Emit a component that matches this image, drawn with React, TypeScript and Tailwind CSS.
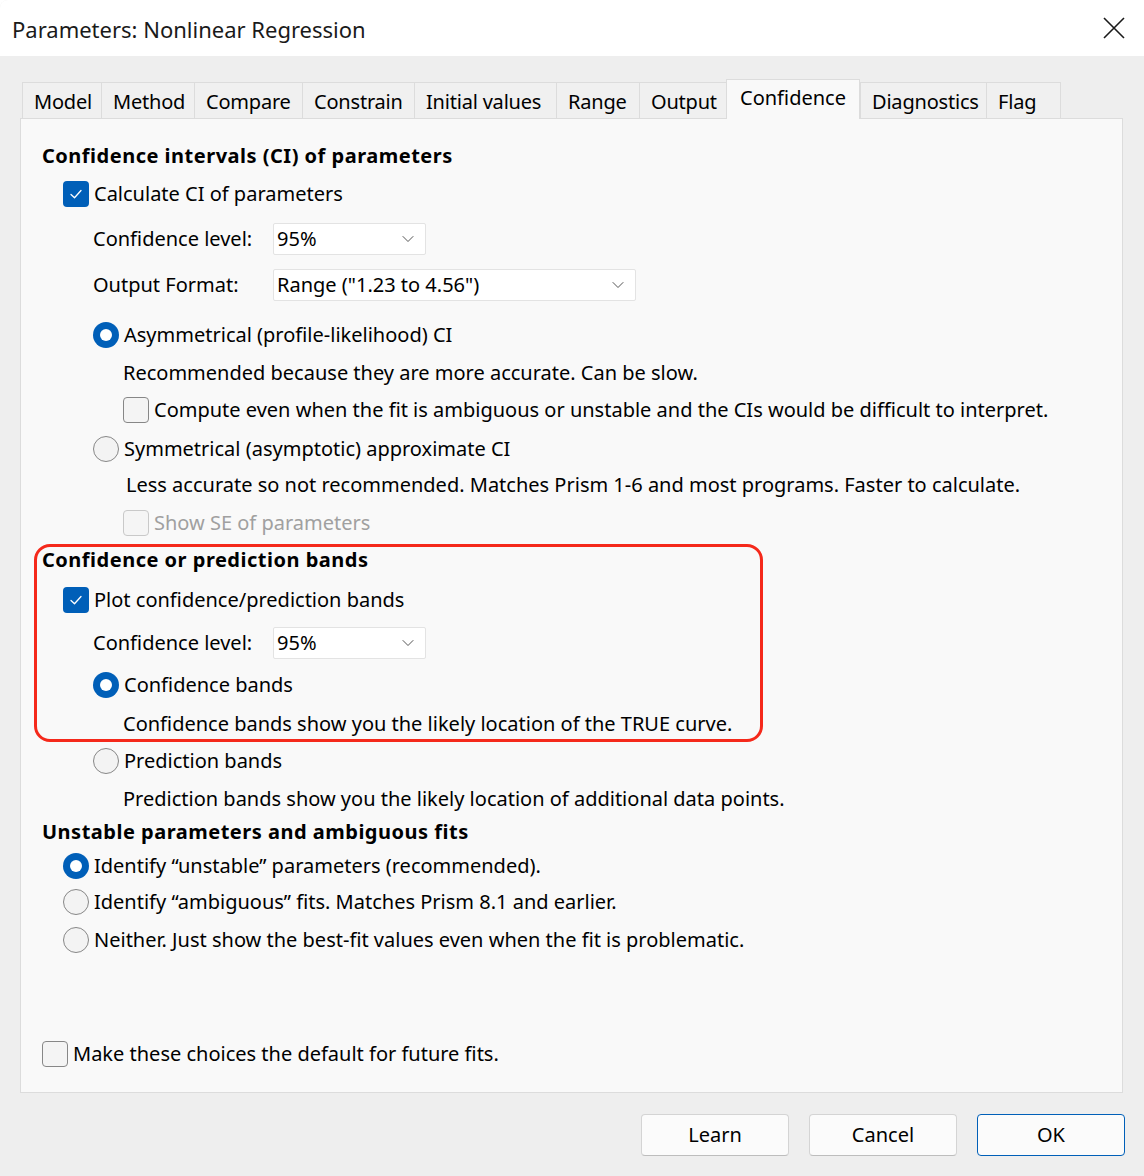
import React from 'react';
import { ChevronDown } from 'lucide-react';

const FONT = { fontFamily: '"Segoe UI", "Noto Sans", "Open Sans", sans-serif' };

const TABS = [
  { label: 'Model', w: 'w-[79px]' },
  { label: 'Method', w: 'w-[93px]' },
  { label: 'Compare', w: 'w-[108px]' },
  { label: 'Constrain', w: 'w-[112px]' },
  { label: 'Initial values', w: 'w-[142px]' },
  { label: 'Range', w: 'w-[83px]' },
  { label: 'Output', w: 'w-[87px]' },
  { label: 'Confidence', w: 'w-[134px]', active: true },
  { label: 'Diagnostics', w: 'w-[126px]' },
  { label: 'Flag', w: 'w-[75px]' },
];

const CheckBox: React.FC<{ checked?: boolean; disabled?: boolean; label: string }> = ({ checked, disabled, label }) => (
  <div className="flex items-center gap-[5px]">
    {checked ? (
      <span className="w-[26px] h-[26px] rounded-[4px] bg-[#005fb8] flex items-center justify-center">
        <svg width="14" height="12" viewBox="0 0 14 12" fill="none">
          <path d="M2 6.5 L5.5 9.8 L12 2.5" stroke="white" strokeWidth="1.3" strokeLinecap="round" strokeLinejoin="round" />
        </svg>
      </span>
    ) : (
      <span
        className={
          disabled
            ? 'w-[26px] h-[26px] rounded-[4px] border border-[#c9c9c9] bg-[#f5f5f5]'
            : 'w-[26px] h-[26px] rounded-[4px] border border-[#878787] bg-[#f4f4f4]'
        }
      />
    )}
    <span className={disabled ? 'text-[#a0a0a0]' : 'text-black'}>{label}</span>
  </div>
);

const Radio: React.FC<{ checked?: boolean; label: string }> = ({ checked, label }) => (
  <div className="flex items-center gap-[5px]">
    {checked ? (
      <span className="w-[26px] h-[26px] rounded-full bg-[#005fb8] flex items-center justify-center">
        <span className="w-[12px] h-[12px] rounded-full bg-white" />
      </span>
    ) : (
      <span className="w-[26px] h-[26px] rounded-full border border-[#878787] bg-[#f3f3f3]" />
    )}
    <span>{label}</span>
  </div>
);

const Select: React.FC<{ value: string; w: string }> = ({ value, w }) => (
  <div className={`${w} h-[32px] bg-white border border-[#e3e3e3] rounded-[2px] flex items-center justify-between pl-[3px] pr-[7px]`}>
    <span>{value}</span>
    <ChevronDown size={20} strokeWidth={1.1} className="text-[#444]" />
  </div>
);

const App: React.FC = () => {
  return (
    <div className="w-[1144px] h-[1176px] bg-[#eeeeee] text-[20px] text-black overflow-hidden rounded-tl-[8px]" style={FONT}>
      {/* title bar */}
      <div className="h-[56px] bg-white flex items-center justify-between pl-[12px] pr-[18px]">
        <span className="text-[22px] text-[#1a1a1a] pt-[2px]">Parameters: Nonlinear Regression</span>
        <svg width="24" height="24" viewBox="0 0 24 24" fill="none">
          <path d="M2 2 L22 22 M22 2 L2 22" stroke="#1a1a1a" strokeWidth="1.6" />
        </svg>
      </div>

      <div className="pl-[20px] pr-[21px] pt-[22px]">
        {/* tabs */}
        <div className="flex items-end h-[40px] pl-[2px]">
          {TABS.map((t) =>
            t.active ? (
              <div
                key={t.label}
                className={`${t.w} h-[40px] bg-[#f9f9f9] border border-b-0 border-[#dcdcdc] pl-[13px] pt-[3px] relative z-10 -mb-px`}
              >
                {t.label}
              </div>
            ) : (
              <div
                key={t.label}
                className={`${t.w} h-[36px] bg-[#f0f0f0] border border-r-0 border-b-0 border-[#dcdcdc] pl-[11px] pt-[4px] tracking-[-0.2px] last:border-r`}
              >
                {t.label}
              </div>
            )
          )}
        </div>

        {/* panel */}
        <div className="h-[975px] bg-[#f9f9f9] border border-[#dcdcdc] pl-[21px] pt-[20px] flex flex-col">
          <div className="h-[34px] flex items-center font-bold tracking-[0.5px]">Confidence intervals (CI) of parameters</div>
          <div className="h-[42px] flex items-center pl-[21px]">
            <CheckBox checked label="Calculate CI of parameters" />
          </div>
          <div className="h-[47px] flex items-center pl-[51px]">
            <span className="w-[180px]">Confidence level:</span>
            <Select value="95%" w="w-[153px]" />
          </div>
          <div className="h-[46px] flex items-center pl-[51px]">
            <span className="w-[180px]">Output Format:</span>
            <Select value={'Range ("1.23 to 4.56")'} w="w-[363px]" />
          </div>
          <div className="h-[47px] flex items-center pl-[51px] pt-[7px]">
            <Radio checked label="Asymmetrical (profile-likelihood) CI" />
          </div>
          <div className="h-[35px] flex items-center pl-[81px]">
            Recommended because they are more accurate. Can be slow.
          </div>
          <div className="h-[40px] flex items-center pl-[81px]">
            <CheckBox label="Compute even when the fit is ambiguous or unstable and the CIs would be difficult to interpret." />
          </div>
          <div className="h-[37px] flex items-center pl-[51px]">
            <Radio label="Symmetrical (asymptotic) approximate CI" />
          </div>
          <div className="h-[36px] flex items-center pl-[84px]">
            Less accurate so not recommended. Matches Prism 1-6 and most programs. Faster to calculate.
          </div>
          <div className="h-[39px] flex items-center pl-[81px]">
            <CheckBox disabled label="Show SE of parameters" />
          </div>

          {/* highlighted block */}
          <div className="relative">
            <div className="absolute left-[-8px] top-[2px] w-[729px] h-[198px] border-[3px] border-[#f5291b] rounded-[16px] pointer-events-none" />
            <div className="h-[36px] flex items-center font-bold tracking-[0.5px]">Confidence or prediction bands</div>
            <div className="h-[43px] flex items-center pl-[21px]">
              <CheckBox checked label="Plot confidence/prediction bands" />
            </div>
            <div className="h-[43px] flex items-center pl-[51px]">
              <span className="w-[180px]">Confidence level:</span>
              <Select value="95%" w="w-[153px]" />
            </div>
            <div className="h-[42px] flex items-center pl-[51px]">
              <Radio checked label="Confidence bands" />
            </div>
            <div className="h-[35px] flex items-center pl-[81px]">
              Confidence bands show you the likely location of the TRUE curve.
            </div>
          </div>

          <div className="h-[40px] flex items-center pl-[51px]">
            <Radio label="Prediction bands" />
          </div>
          <div className="h-[35px] flex items-center pl-[81px]">
            Prediction bands show you the likely location of additional data points.
          </div>
          <div className="h-[32px] flex items-center font-bold tracking-[0.5px]">Unstable parameters and ambiguous fits</div>
          <div className="h-[35px] flex items-center pl-[21px]">
            <Radio checked label="Identify “unstable” parameters (recommended)." />
          </div>
          <div className="h-[38px] flex items-center pl-[21px]">
            <Radio label="Identify “ambiguous” fits. Matches Prism 8.1 and earlier." />
          </div>
          <div className="h-[38px] flex items-center pl-[21px]">
            <Radio label="Neither. Just show the best-fit values even when the fit is problematic." />
          </div>

          <div className="h-[77px]" />
          <div className="h-[36px] flex items-center">
            <CheckBox label="Make these choices the default for future fits." />
          </div>
        </div>

        {/* buttons */}
        <div className="flex justify-end gap-[20px] pt-[21px] -mr-[2px]">
          <button className="w-[148px] h-[42px] bg-[#fbfbfb] border border-[#d4d4d4] border-b-[#bdbdbd] rounded-[4px]">Learn</button>
          <button className="w-[148px] h-[42px] bg-[#fbfbfb] border border-[#d4d4d4] border-b-[#bdbdbd] rounded-[4px]">Cancel</button>
          <button className="w-[148px] h-[42px] bg-[#fbfbfb] border border-[#005fb8] rounded-[4px]">OK</button>
        </div>
      </div>
    </div>
  );
};

export default App;
